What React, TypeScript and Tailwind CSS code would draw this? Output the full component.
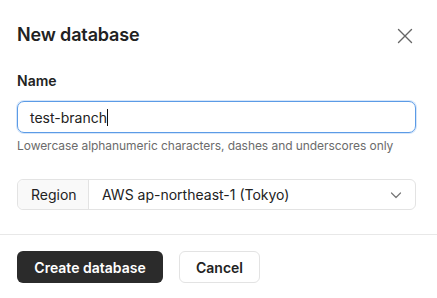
import React from "react";

export default function App() {
  return (
    <div
      className="w-[437px] h-[298px] bg-white overflow-hidden text-[#222]"
      style={{ fontFamily: "Inter, 'Noto Sans', sans-serif" }}
    >
      <div className="pl-[17px] pr-[21px]">
        <div className="flex items-center justify-between pt-[23px] h-[47px]">
          <h1 className="text-[18px] leading-[24px] font-semibold tracking-[-0.15px] text-[#222]">New database</h1>
          <button className="w-[20px] h-[20px] flex items-center justify-center mr-[1px] mt-[1px]">
            <svg width="16" height="16" viewBox="0 0 16 16" fill="none">
              <path d="M1.5 1.5L14.5 14.5M14.5 1.5L1.5 14.5" stroke="#666" strokeWidth="1.4" strokeLinecap="round" />
            </svg>
          </button>
        </div>
        <div className="mt-[24px] text-[14px] leading-[20px] font-semibold text-[#222]">Name</div>
        <div className="mt-[10px] h-[32px] rounded-[7px] border-[1.5px] border-[#5b9be6] shadow-[0_0_0_1px_#d6e6fa] flex items-center pl-[12px] text-[14px] text-[#222]">
          <span>test-branch</span>
          <span className="inline-block w-[1px] h-[17px] bg-[#111]" />
        </div>
        <div className="mt-[5px] text-[12px] leading-[16px] tracking-[-0.06px] text-[#6b6b6b]">
          Lowercase alphanumeric characters, dashes and underscores only
        </div>
        <div className="mt-[25px] h-[31px] rounded-[6px] border border-[#e3e3e3] flex items-stretch text-[14px]">
          <div className="w-[71px] bg-[#f9f9f9] border-r border-[#e3e3e3] rounded-l-[6px] flex items-center pl-[13px] text-[#222]">
            Region
          </div>
          <div className="flex-1 flex items-center justify-between pl-[13px] pr-[13px] text-[#222]">
            <span>AWS ap-northeast-1 (Tokyo)</span>
            <svg width="12" height="8" viewBox="0 0 12 8" fill="none">
              <path d="M1.5 2L6 6.5L10.5 2" stroke="#777" strokeWidth="1.2" strokeLinecap="round" strokeLinejoin="round" />
            </svg>
          </div>
        </div>
      </div>
      <div className="mt-[24px] h-px bg-[#e8e8e8]" />
      <div className="pl-[17px] mt-[16px] flex gap-[16px]">
        <button className="h-[32px] w-[146px] rounded-[6px] bg-[#2b2b2b] text-white text-[14px] font-semibold">
          Create database
        </button>
        <button className="h-[32px] w-[81px] rounded-[6px] border border-[#e3e3e3] bg-white text-[#222] text-[14px] font-semibold">
          Cancel
        </button>
      </div>
    </div>
  );
}
